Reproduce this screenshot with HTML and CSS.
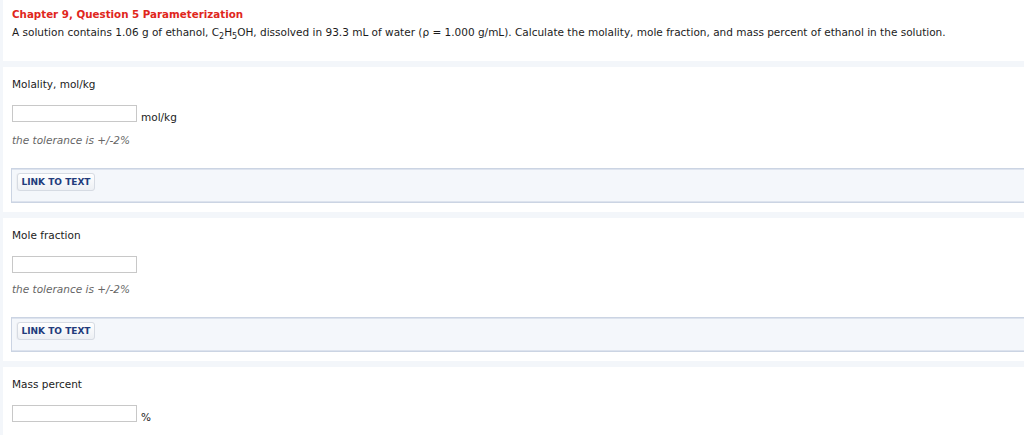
FILE: index.html
```html
<!DOCTYPE html>
<html lang="en">

<head>
    <meta charset="UTF-8">
    <meta name="viewport" content="width=device-width, initial-scale=1.0">
    <title>Chapter 9, Question 5</title>
    <link rel="stylesheet" href="styles.css">
</head>

<body>
    <div class="page">
        <div class="panel question">
            <h1 class="question-title">Chapter 9, Question 5 Parameterization</h1>
            <p class="question-text">A solution contains 1.06 g of ethanol, C<sub>2</sub>H<sub>5</sub>OH, dissolved in 93.3 mL of water (&rho; = 1.000 g/mL). Calculate the molality, mole fraction, and mass percent of ethanol in the solution.</p>
        </div>

        <div class="panel part">
            <p class="part-label">Molality, mol/kg</p>
            <div class="answer-row">
                <input class="answer-input" type="text">
                <span class="unit">mol/kg</span>
            </div>
            <p class="tolerance">the tolerance is +/-2%</p>
            <div class="link-box">
                <button class="link-btn">Link to Text</button>
            </div>
        </div>

        <div class="panel part">
            <p class="part-label">Mole fraction</p>
            <div class="answer-row">
                <input class="answer-input" type="text">
            </div>
            <p class="tolerance">the tolerance is +/-2%</p>
            <div class="link-box">
                <button class="link-btn">Link to Text</button>
            </div>
        </div>

        <div class="panel part last-part">
            <p class="part-label">Mass percent</p>
            <div class="answer-row">
                <input class="answer-input" type="text">
                <span class="unit">%</span>
            </div>
        </div>
    </div>
</body>

</html>
```

FILE: styles.css
```css
* {
    padding: 0;
    margin: 0;
    box-sizing: border-box;
}

html,
body {
    width: 100%;
    height: 100%;
    background-color: #f3f6fa;
    font-family: Verdana, "DejaVu Sans", sans-serif;
    font-size: 10.5px;
    color: #1c1c1c;
    overflow: hidden;
}

.page {
    display: flex;
    flex-direction: column;
    gap: 6px;
    margin-left: 3px;
    width: 1100px;
}

.panel {
    background-color: #fff;
    padding: 0 9px;
}

.question {
    padding-top: 7px;
    padding-bottom: 22px;
}

.question-title {
    font-size: 10.3px;
    font-weight: bold;
    line-height: 14px;
    color: #e0261c;
}

.question-text {
    margin-top: 4px;
    line-height: 14px;
}

.question-text sub {
    font-size: 8px;
    line-height: 0;
    vertical-align: -3px;
}

.part {
    padding-top: 10px;
    padding-bottom: 9px;
}

.last-part {
    padding-bottom: 30px;
}

.part-label {
    line-height: 14px;
}

.answer-row {
    display: flex;
    align-items: flex-start;
    gap: 4px;
    margin-top: 14px;
}

.answer-input {
    width: 125px;
    height: 17px;
    border: 1px solid #c8c8c8;
    background-color: #fff;
}

.unit {
    line-height: 14px;
    padding-top: 5px;
}

.tolerance {
    margin-top: 9px;
    line-height: 14px;
    font-style: italic;
    color: #666;
}

.link-box {
    margin-top: 21px;
    margin-left: -1px;
    height: 35px;
    padding: 4px 5px;
    background-color: #f4f7fb;
    border: 1px solid #cbd4e3;
    box-shadow: inset 0 1px 0 #dde3ee, inset 0 -1px 0 #dde3ee;
}

.link-btn {
    width: 78px;
    height: 18px;
    font-family: Verdana, "DejaVu Sans", sans-serif;
    font-size: 9px;
    font-weight: bold;
    text-transform: uppercase;
    color: #223c7c;
    background-image: linear-gradient(#ffffff, #edf0f4);
    border: 1px solid #d6dbe3;
    border-radius: 3px;
    box-shadow: -1px 0 0 #eef0f3;
}
```
